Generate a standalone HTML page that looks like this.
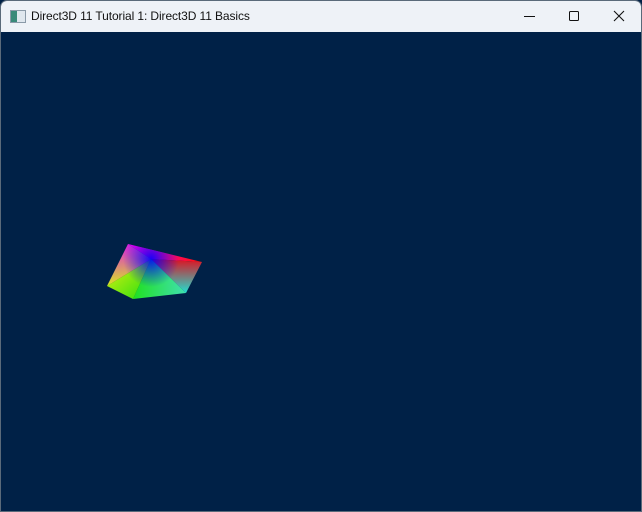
<!DOCTYPE html>
<html><head><style>
html,body{margin:0;padding:0;width:642px;height:512px;overflow:hidden;background:#002147;}
.win{position:absolute;left:0;top:0;width:640px;height:510px;border:1px solid #5a6a7a;border-radius:7px 7px 0 0;overflow:hidden;background:#002147;}
.tb{position:absolute;left:0;top:0;width:640px;height:31px;background:#eef2f7;font-family:"Liberation Sans",sans-serif;font-size:12px;color:#111;}
.tb .t{position:absolute;left:30px;top:8px;letter-spacing:-0.1px;}
.ic{position:absolute;left:9px;top:9px;width:14px;height:11px;border:1px solid #8a9aa8;background:linear-gradient(90deg,#3a8a7a 0 6px,#dfe7ee 6px);}
</style></head><body>
<div class="win">
<div class="tb">
<div class="ic"></div>
<div class="t">Direct3D 11 Tutorial 1: Direct3D 11 Basics</div>
<svg style="position:absolute;left:520px;top:8px" width="110" height="16">
<line x1="3" y1="7.5" x2="14" y2="7.5" stroke="#111" stroke-width="1"/>
<rect x="48.5" y="2.5" width="9" height="9" fill="none" stroke="#111" stroke-width="1" rx="1"/>
<path d="M93 2 L103 12 M103 2 L93 12" stroke="#111" stroke-width="1.1"/>
</svg>
</div>
<svg style="position:absolute;left:0;top:0" width="640" height="510">
<defs>
<linearGradient id="g1" x1="0" y1="0" x2="1" y2="0"><stop offset="0" stop-color="#ff00ff"/><stop offset="1" stop-color="#ff1000"/></linearGradient>
<linearGradient id="g2" x1="0" y1="0" x2="0" y2="1"><stop offset="0" stop-color="#e01020"/><stop offset="1" stop-color="#20e0d0"/></linearGradient>
<linearGradient id="g3" x1="0" y1="0" x2="1" y2="0"><stop offset="0" stop-color="#20e020"/><stop offset="1" stop-color="#40e0b0"/></linearGradient>
<linearGradient id="g4" x1="0" y1="0" x2="1" y2="1"><stop offset="0" stop-color="#e8f010"/><stop offset="1" stop-color="#20e010"/></linearGradient>
<linearGradient id="g5" x1="0" y1="0" x2="0" y2="1"><stop offset="0" stop-color="#e020e0"/><stop offset="1" stop-color="#d8e820"/></linearGradient>
<radialGradient id="c" cx="150" cy="258" r="28" gradientUnits="userSpaceOnUse"><stop offset="0" stop-color="#0000ff" stop-opacity="0.9"/><stop offset="1" stop-color="#0000ff" stop-opacity="0"/></radialGradient>
</defs>
<polygon points="127,243 201,261 150,258" fill="url(#g1)"/>
<polygon points="201,261 185,292 150,258" fill="url(#g2)"/>
<polygon points="185,292 132,298 150,258" fill="url(#g3)"/>
<polygon points="132,298 106,285 150,258" fill="url(#g4)"/>
<polygon points="106,285 127,243 150,258" fill="url(#g5)"/>
<polygon points="127,243 201,261 185,292 132,298 106,285" fill="url(#c)"/>
</svg>
</div>
</body></html>
